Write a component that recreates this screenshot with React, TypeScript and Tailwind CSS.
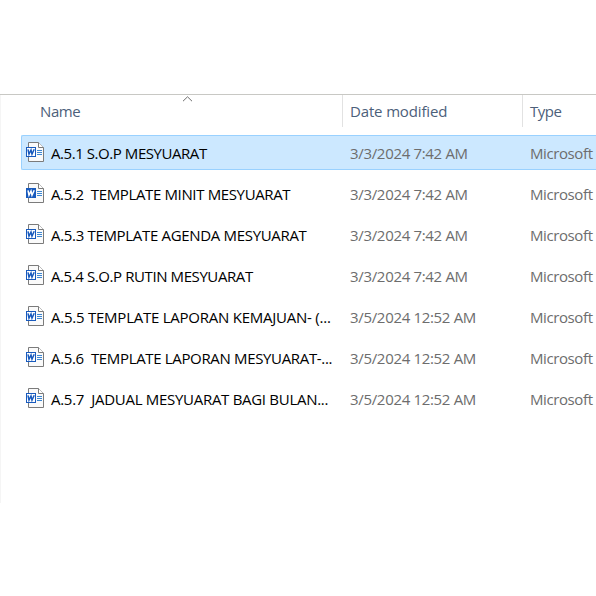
type FileRow = {
  name: string;
  fit: string;
  date: string;
  solid?: boolean;
  selected?: boolean;
};

const files: FileRow[] = [
  { name: 'A.5.1 S.O.P MESYUARAT', fit: 'tracking-[-0.44px]', date: '3/3/2024 7:42 AM', selected: true },
  { name: 'A.5.2  TEMPLATE MINIT MESYUARAT', fit: 'tracking-[-0.36px]', date: '3/3/2024 7:42 AM', solid: true },
  { name: 'A.5.3 TEMPLATE AGENDA MESYUARAT', fit: 'tracking-[-0.32px]', date: '3/3/2024 7:42 AM' },
  { name: 'A.5.4 S.O.P RUTIN MESYUARAT', fit: 'tracking-[-0.41px]', date: '3/3/2024 7:42 AM' },
  { name: 'A.5.5 TEMPLATE LAPORAN KEMAJUAN- (...', fit: 'tracking-[-0.24px]', date: '3/5/2024 12:52 AM' },
  { name: 'A.5.6  TEMPLATE LAPORAN MESYUARAT-...', fit: 'tracking-[-0.34px]', date: '3/5/2024 12:52 AM' },
  { name: 'A.5.7  JADUAL MESYUARAT BAGI BULAN...', fit: 'tracking-[-0.29px]', date: '3/5/2024 12:52 AM' },
];

function WordIcon({ solid }: { solid?: boolean }) {
  return (
    <svg width="18" height="20" viewBox="0 0 18 20" className="mb-[2px] shrink-0" fill="none">
      <path d="M2.5 .5H12.5L17.5 5.5V19.5H2.5Z" fill="#fafafa" stroke="#7b7b7b" />
      <path d="M12.5 .5V5.5H17.5" fill="#fff" stroke="#7b7b7b" />
      <path d="M11 8.5H16M11 10.5H16M11 12.5H16" stroke="#3c86d2" />
      <rect x=".5" y="5.5" width="9" height="9" fill={solid ? '#185abd' : '#fff'} stroke="#185abd" />
      <path
        d="M2 7.3L3 12.2L5 8L6 12.2L8.2 7.3"
        stroke={solid ? '#fff' : '#185abd'}
        strokeWidth="1.5"
      />
    </svg>
  );
}

export default function App() {
  return (
    <div className="h-[596px] w-[596px] overflow-hidden bg-white pt-[94px] font-['Open_Sans','Noto_Sans',sans-serif] text-[15px] leading-5">
      <div className="h-[409px] border-t border-t-[#c8c8c4]">
        <div className="h-full border-l border-l-[#f5f5f5]">
          <header className="flex h-8 text-[#4c607a]">
            <div className="relative w-[342px] border-r border-[#e2e2e2] pt-[6px] pl-[39px]">
              <span className="tracking-[-0.4px]">Name</span>
              <svg width="11" height="6" viewBox="0 0 11 6" className="absolute top-px left-[181px]" fill="none">
                <path d="M1 5.2L5.5 .8L10 5.2" stroke="#6d6d6d" />
              </svg>
            </div>
            <div className="w-[180px] border-r border-[#e2e2e2] pt-[6px] pl-[7px] tracking-[-0.15px]">Date modified</div>
            <div className="pt-[6px] pl-[7px] tracking-[-0.5px]">Type</div>
          </header>
          <main className="flex flex-col gap-1.5 pt-2 pl-5">
            {files.map((file) => (
              <div
                key={file.name}
                className={`flex h-[35px] items-center border pl-1 whitespace-pre text-[#6d6d6d] ${
                  file.selected ? 'rounded-l-[2px] border-r-0 border-[#99d1ff] bg-[#cce8ff]' : 'border-transparent'
                }`}
              >
                <WordIcon solid={file.solid} />
                <span className={`ml-[7px] w-[299px] shrink-0 text-black ${file.fit}`}>{file.name}</span>
                <span className="w-[180px] shrink-0 tracking-[-0.32px]">{file.date}</span>
                <span className="shrink-0 tracking-[-0.4px]">Microsoft</span>
              </div>
            ))}
          </main>
        </div>
      </div>
    </div>
  );
}
